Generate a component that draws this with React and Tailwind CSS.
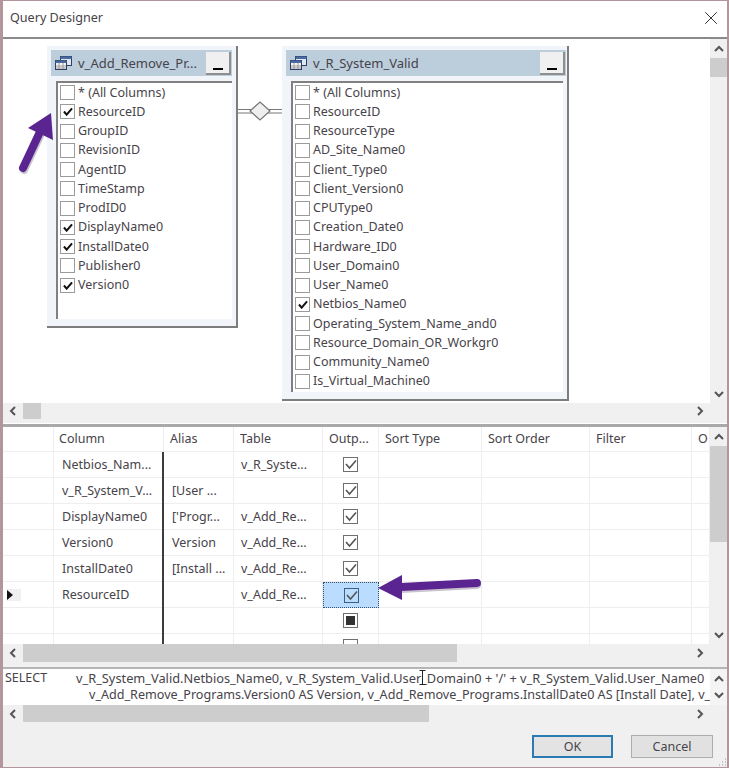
import { X } from "lucide-react";

const table1 = [
  ["* (All Columns)", false],
  ["ResourceID", true],
  ["GroupID", false],
  ["RevisionID", false],
  ["AgentID", false],
  ["TimeStamp", false],
  ["ProdID0", false],
  ["DisplayName0", true],
  ["InstallDate0", true],
  ["Publisher0", false],
  ["Version0", true],
];

const table2 = [
  ["* (All Columns)", false],
  ["ResourceID", false],
  ["ResourceType", false],
  ["AD_Site_Name0", false],
  ["Client_Type0", false],
  ["Client_Version0", false],
  ["CPUType0", false],
  ["Creation_Date0", false],
  ["Hardware_ID0", false],
  ["User_Domain0", false],
  ["User_Name0", false],
  ["Netbios_Name0", true],
  ["Operating_System_Name_and0", false],
  ["Resource_Domain_OR_Workgr0", false],
  ["Community_Name0", false],
  ["Is_Virtual_Machine0", false],
];

const headers = ["", "Column", "Alias", "Table", "Outp...", "Sort Type", "Sort Order", "Filter", "O"];

const rows = [
  ["Netbios_Nam...", "", "v_R_Syste...", "checked"],
  ["v_R_System_V...", "[User ...", "", "checked"],
  ["DisplayName0", "['Progr...", "v_Add_Re...", "checked"],
  ["Version0", "Version", "v_Add_Re...", "checked"],
  ["InstallDate0", "[Install ...", "v_Add_Re...", "checked"],
  ["ResourceID", "", "v_Add_Re...", "checked"],
  ["", "", "", "mixed"],
  ["", "", "", "empty"],
];

const gridCols = "grid grid-cols-[51px_110px_70px_89px_56px_103px_108px_102px_18px]";
const cell = "border-r border-b border-[#eeeeee] flex items-center whitespace-nowrap overflow-hidden";

function Chevron({ dir }) {
  const points = {
    up: "1,6 5,2 9,6",
    down: "1,2 5,6 9,2",
    left: "6,1 2,5 6,9",
    right: "2,1 6,5 2,9",
  };
  const box = dir === "up" || dir === "down" ? "0 0 10 8" : "0 0 8 10";
  const size = dir === "up" || dir === "down" ? "w-[10px] h-[8px]" : "w-[8px] h-[10px]";
  return (
    <svg viewBox={box} className={size}>
      <polyline points={points[dir]} fill="none" stroke="#555" strokeWidth="2" />
    </svg>
  );
}

function HScroll({ height, thumb, strip }) {
  return (
    <div className={`flex shrink-0 bg-[#f0f0f0] ${height}`}>
      <div className={`w-[20px] flex items-center justify-center ${strip}`}>
        <Chevron dir="left" />
      </div>
      <div className={`flex-1 ${strip}`}>
        <div className={`h-full bg-[#cdcdcd] ${thumb}`}></div>
      </div>
      <div className={`w-[20px] flex items-center justify-center ${strip}`}>
        <Chevron dir="right" />
      </div>
      <div className="w-[17px]"></div>
    </div>
  );
}

function VScroll({ thumb }) {
  return (
    <div className="w-[17px] shrink-0 bg-[#f0f0f0] flex flex-col">
      <div className="h-[19px] shrink-0 flex items-center justify-center">
        <Chevron dir="up" />
      </div>
      <div className="flex-1">
        <div className={`bg-[#cdcdcd] ${thumb}`}></div>
      </div>
      <div className="h-[19px] shrink-0 flex items-center justify-center">
        <Chevron dir="down" />
      </div>
    </div>
  );
}

function TableIcon() {
  return (
    <svg viewBox="0 0 17 16" className="w-[17px] h-[16px] shrink-0">
      <rect x="5.5" y="1.5" width="11" height="9" fill="#dfe8f2" stroke="#2d3f66" />
      <rect x="5.5" y="1.5" width="11" height="2.5" fill="#4a6aa0" />
      <rect x="0.5" y="5.5" width="11" height="9" fill="#f4f4f4" stroke="#2d3f66" />
      <rect x="0.5" y="5.5" width="11" height="2.5" fill="#4a6aa0" />
      <path d="M1 11 H11 M1 13 H11 M4 8 V14 M8 8 V14" stroke="#8a8a8a" strokeWidth="0.8" />
    </svg>
  );
}

function ColumnRow({ name, checked }) {
  return (
    <div className="h-[19.25px] flex items-center gap-[3px] pl-[2px] shrink-0">
      <span className="w-[15px] h-[15px] shrink-0 border border-[#9b9b9b] bg-white flex items-center justify-center">
        {checked && (
          <svg viewBox="0 0 11 10" className="w-[10px] h-[9px]">
            <path d="M1 5 L4 8.5 L10 1.5" fill="none" stroke="#111" strokeWidth="2.2" />
          </svg>
        )}
      </span>
      <span className="whitespace-nowrap">{name}</span>
    </div>
  );
}

function TableNode({ pos, title, cols, titleMargin }) {
  return (
    <div className={`absolute ${pos} bg-[#f1f5fa] border-r-2 border-b-2 border-[#7d7d7d] flex flex-col pt-[4px] pl-[4px]`}>
      <div className={`h-[26px] shrink-0 bg-[#bccddc] flex items-center pl-[4px] pr-[1px] text-[13px] ${titleMargin}`}>
        <TableIcon />
        <span className="ml-[6px] flex-1 whitespace-nowrap">{title}</span>
        <span className="w-[25px] h-[23px] bg-[#f0f0f0] border-r-2 border-b-2 border-[#8f8f8f] flex items-end justify-center pb-[3px]">
          <span className="w-[10px] h-[2px] bg-black"></span>
        </span>
      </div>
      <div className="flex-1 mt-[5px] ml-[5px] mr-[4px] mb-[7px] bg-white border-l-2 border-t-2 border-[#808080] overflow-hidden">
        {cols.map(([name, checked]) => (
          <ColumnRow key={name} name={name} checked={checked} />
        ))}
      </div>
    </div>
  );
}

function OutputBox({ kind, selected }) {
  return (
    <span className={`w-[15px] h-[15px] shrink-0 border flex items-center justify-center ${selected ? "border-[#3f5f80]" : "border-[#6f6f6f]"}`}>
      {kind === "checked" && (
        <svg viewBox="0 0 13 13" className="w-[13px] h-[13px]">
          <path d="M2 6 L5.5 10 L12 2.5" fill="none" stroke="#555" strokeWidth="1.6" />
        </svg>
      )}
      {kind === "mixed" && <span className="w-[9px] h-[9px] bg-[#333]"></span>}
    </span>
  );
}

export default function App() {
  return (
    <div className="w-[729px] h-[768px] overflow-hidden bg-white border-l-[3px] border-r-2 border-t border-b border-[#b2969b] flex flex-col text-[12.5px] leading-[16px] text-[#47434a] font-['Noto_Sans',sans-serif]">
      {/* title bar */}
      <div className="h-[36px] shrink-0 flex items-center justify-between pl-[7px] pr-[5px] pb-[2px] text-[12.6px]">
        <span>Query Designer</span>
        <X size={22} strokeWidth={1} color="#222" />
      </div>
      <div className="h-[2px] shrink-0 bg-[#8a8a8a]"></div>

      {/* diagram pane */}
      <div className="h-[364px] shrink-0 flex">
        <div className="flex-1 relative bg-white overflow-hidden">
          <TableNode pos="left-[44px] top-[7px] w-[191px] h-[282px]" title="v_Add_Remove_Pr..." cols={table1} titleMargin="mr-[4px]" />
          <TableNode pos="left-[279px] top-[7px] w-[287px] h-[355px]" title="v_R_System_Valid" cols={table2} titleMargin="mr-[1px]" />
          <svg viewBox="0 0 44 24" className="absolute left-[235px] top-[60px] w-[44px] h-[24px]">
            <path d="M0 10.5 H44 M0 14 H44" stroke="#777" strokeWidth="1.2" />
            <polygon points="22,3 32,12 22,21 12,12" fill="#efefef" stroke="#777" strokeWidth="1.2" />
          </svg>
          <svg viewBox="0 0 40 66" className="absolute left-[15px] top-[70px] w-[40px] h-[66px]">
            <path d="M5 59 L21 25" stroke="#c9c3cf" strokeWidth="8" strokeLinecap="round" transform="translate(1 2)" />
            <path d="M5 59 L21 25" stroke="#5a2590" strokeWidth="8" strokeLinecap="round" />
            <polygon points="33,4 35,31 10,19" fill="#5a2590" />
          </svg>
        </div>
        <VScroll thumb="h-[19px]" />
      </div>
      <HScroll height="h-[20px]" thumb="w-[18px]" strip="h-[16px]" />
      <div className="h-[1px] shrink-0 bg-white"></div>
      <div className="h-[3px] shrink-0 bg-[#a9a9a9]"></div>

      {/* criteria grid */}
      <div className="h-[217px] shrink-0 flex">
        <div className="flex-1 overflow-hidden relative">
          <div className={`${gridCols} h-[25px]`}>
            {headers.map((h, i) => (
              <div key={i} className={`${cell} ${i === 1 ? "pl-[5px]" : "pl-[6px]"}`}>{h}</div>
            ))}
          </div>
          {rows.map((row, i) => {
            const selected = i === 5;
            return (
              <div key={i} className={`${gridCols} h-[26px]`}>
                <div className={`${cell} pl-[4px]`}>
                  {selected && (
                    <span className="w-[14px] h-[12px] bg-[#f0f0f0] flex items-center">
                      <svg viewBox="0 0 6 10" className="w-[6px] h-[10px]">
                        <polygon points="0,0 6,5 0,10" fill="#111" />
                      </svg>
                    </span>
                  )}
                </div>
                <div className={`${cell} pl-[8px]`}>{row[0]}</div>
                <div className={`${cell} pl-[8px]`}>{row[1]}</div>
                <div className={`${cell} pl-[7px]`}>{row[2]}</div>
                <div className={`${cell} justify-center ${selected ? "bg-[#b9dcff] border border-dotted !border-[#33506e]" : ""}`}>
                  <OutputBox kind={row[3]} selected={selected} />
                </div>
                <div className={cell}></div>
                <div className={cell}></div>
                <div className={cell}></div>
                <div className={cell}></div>
              </div>
            );
          })}
          {/* frozen column divider */}
          <div className="absolute left-[159px] top-[25px] bottom-0 w-[2px] bg-[#3c3c3c]"></div>
          <svg viewBox="0 0 106 30" className="absolute left-[374px] top-[146px] w-[106px] h-[30px]">
            <path d="M24 14 L100 10" stroke="#c9c3cf" strokeWidth="8" strokeLinecap="round" transform="translate(0 2)" />
            <polygon points="1,15 25,2 25,27" fill="#5a2590" />
            <path d="M24 14 L100 10" stroke="#5a2590" strokeWidth="8" strokeLinecap="round" />
          </svg>
        </div>
        <VScroll thumb="h-[96px]" />
      </div>
      <HScroll height="h-[23px]" thumb="w-[434px]" strip="h-[18px]" />
      <div className="h-[2px] shrink-0 bg-[#b5b5b5]"></div>

      {/* sql pane */}
      <div className="h-[36px] shrink-0 flex">
        <div className="flex-1 overflow-hidden bg-white pl-[2px] pt-[1px] whitespace-nowrap">
          <div className="flex h-[16px] items-center text-[12.8px]">
            <span className="w-[71px] shrink-0 text-[12.5px]">SELECT</span>
            <span className="relative">
              v_R_System_Valid.Netbios_Name0, v_R_System_Valid.User_Domain0 + '/' + v_R_System_Valid.User_Name0
              <svg viewBox="0 0 7 15" className="absolute left-[343px] top-[0px] w-[7px] h-[15px]">
                <path d="M0.5 0.5 H6.5 M3.5 0.5 V14.5 M0.5 14.5 H6.5" fill="none" stroke="#222" strokeWidth="1" />
              </svg>
            </span>
          </div>
          <div className="flex h-[17px] items-center pl-[84px] text-[12.6px]">
            v_Add_Remove_Programs.Version0 AS Version, v_Add_Remove_Programs.InstallDate0 AS [Install Date], v_Add
          </div>
        </div>
        <div className="w-[17px] shrink-0 bg-[#f4f4f4] flex flex-col items-center justify-around py-[2px]">
          <Chevron dir="up" />
          <Chevron dir="down" />
        </div>
      </div>
      <HScroll height="h-[17px]" thumb="w-[406px]" strip="h-[17px]" />

      {/* buttons */}
      <div className="flex-1 bg-[#f0f0f0] relative flex items-start justify-end gap-[18px] pt-[13px] pr-[14px]">
        <button className="w-[81px] h-[23px] bg-[#e3e3e3] border-2 border-[#2b7ab3] text-[#47434a] text-[12.5px]">OK</button>
        <button className="w-[82px] h-[23px] bg-[#e1e1e1] border border-[#adadad] text-[#47434a] text-[12.5px]">Cancel</button>
        <svg viewBox="0 0 10 10" className="absolute right-0 bottom-0 w-[10px] h-[10px]">
          <path d="M8 2 h1 M5 5 h1 M8 5 h1 M2 8 h1 M5 8 h1 M8 8 h1" stroke="#b5b5b5" strokeWidth="1.4" />
        </svg>
      </div>
    </div>
  );
}
